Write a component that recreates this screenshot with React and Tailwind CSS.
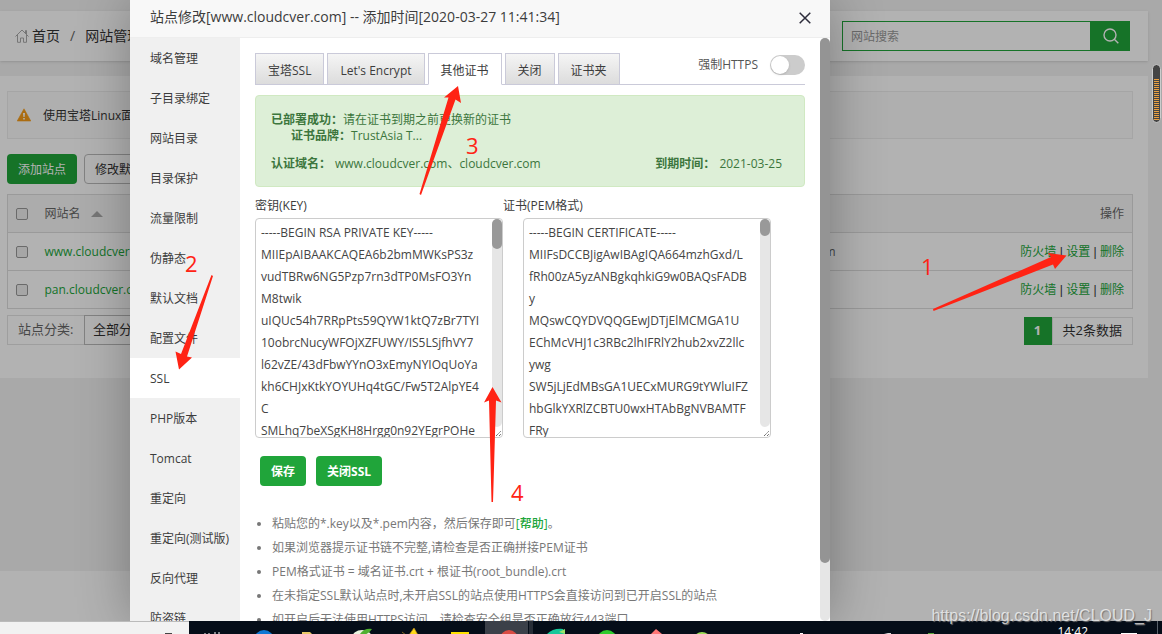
import React, { useState } from 'react';

const sites = [
  { name: 'www.cloudcver.com', note: 'www.cloudcver.com' },
  { name: 'pan.cloudcver.com', note: '' },
];

const menus = [
  '域名管理', '子目录绑定', '网站目录', '目录保护', '流量限制', '伪静态', '默认文档', '配置文件',
  'SSL', 'PHP版本', 'Tomcat', '重定向', '重定向(测试版)', '反向代理', '防盗链',
];

const tabs = ['宝塔SSL', "Let's Encrypt", '其他证书', '关闭', '证书夹'];

const keyText = `-----BEGIN RSA PRIVATE KEY-----
MIIEpAIBAAKCAQEA6b2bmMWKsPS3z
vudTBRw6NG5Pzp7rn3dTP0MsFO3Yn
M8twik
uIQUc54h7RRpPts59QYW1ktQ7zBr7TYI
10obrcNucyWFOjXZFUWY/IS5LSjfhVY7
l62vZE/43dFbwYYnO3xEmyNYIOqUoYa
kh6CHJxKtkYOYUHq4tGC/Fw5T2AlpYE4
C
SMLhq7beXSgKH8Hrgg0n92YEgrPOHe`;

const pemText = `-----BEGIN CERTIFICATE-----
MIIFsDCCBJigAwIBAgIQA664mzhGxd/L
fRh00zA5yzANBgkqhkiG9w0BAQsFADB
y
MQswCQYDVQQGEwJDTjElMCMGA1U
EChMcVHJ1c3RBc2lhIFRlY2hub2xvZ2llc
ywg
SW5jLjEdMBsGA1UECxMURG9tYWluIFZ
hbGlkYXRlZCBTU0wxHTAbBgNVBAMTF
FRy`;

const HomeIcon = () => (
  <svg className="h-3.5 w-3.5" viewBox="0 0 14 14" fill="none" stroke="#aaa" strokeWidth="1">
    <path d="M.5 7.5 7 1l6.5 6.5M2.5 6v7.3h3V9h3v4.3h3V6M10.5 4V1.5h1V5" />
  </svg>
);

const WarnIcon = () => (
  <svg className="h-3.5 w-3.5" viewBox="0 0 14 14">
    <path d="M7 .8 13.8 13H.2z" fill="#f59c1a" stroke="#f59c1a" strokeLinejoin="round" strokeWidth=".6" />
    <path d="M6 5h2l-.4 4H6.4zM6.2 10h1.6v1.5H6.2z" fill="#fff" />
  </svg>
);

const CodeBox = ({ id, value, thumb }) => (
  <div className="relative flex h-[220px] w-[248px] rounded-sm border border-[#ccc] bg-white">
    <textarea
      id={id}
      defaultValue={value}
      spellCheck={false}
      className="min-w-0 flex-1 resize-none overflow-hidden whitespace-pre py-[3px] pl-[5px] text-xs leading-[22px] text-[#444] outline-none"
    />
    <div className="flex w-2.5 flex-col">
      <div className="flex-1 rounded-full bg-[#e6e6e6]">
        <div className={`rounded-full bg-[#999] ${thumb}`} />
      </div>
      <svg className="h-2.5 w-2.5" viewBox="0 0 10 10" stroke="#555" strokeWidth="1">
        <path d="M4 9l5-5M7 9l2-2" strokeDasharray="1.2 .6" />
      </svg>
    </div>
  </div>
);

const SitePage = () => (
  <div className="flex h-full flex-col pt-[11px] text-xs text-[#333]">
    <header className="mr-3.5 flex h-[50px] shrink-0 items-center justify-between bg-white pl-[15px] pr-[18px] shadow">
      <nav className="flex items-center text-sm">
        <HomeIcon />
        <a href="#home" className="ml-[3px]">首页</a>
        <span className="mx-2.5 text-[#666]">/</span>
        <a href="#site">网站管理</a>
      </nav>
      <form className="flex h-[30px] w-[288px]">
        <input
          type="text"
          aria-label="网站搜索"
          placeholder="网站搜索"
          className="min-w-0 flex-1 border border-[#20a53a] px-2 pt-0.5 outline-none placeholder:text-[#999]"
        />
        <button type="button" aria-label="搜索" className="flex w-[39px] items-center justify-center bg-[#20a53a]">
          <svg className="h-4 w-4" viewBox="0 0 16 16" fill="none" stroke="#fff" strokeWidth="1.4">
            <circle cx="7" cy="7" r="6" />
            <path d="M11.3 11.3l4 4" />
          </svg>
        </button>
      </form>
    </header>

    <section className="mr-3.5 mt-[15px] h-[302px] shrink-0 bg-white pl-[7px] pr-[15px] pt-[15px]">
      <div className="flex h-12 items-center gap-3 border border-[#ececec] bg-[#fbfbfb] pl-[9px]">
        <WarnIcon />
        <p className="pt-0.5">使用宝塔Linux面板创建站点时会自动创建权限</p>
      </div>
      <div className="mt-[15px] flex h-[30px] gap-[7px]">
        <button type="button" className="rounded-sm bg-[#20a53a] px-[11px] pt-0.5 text-white">添加站点</button>
        <button type="button" className="rounded-sm border border-[#bbb] px-2.5 pt-0.5">修改默认页</button>
      </div>
      <table className="mt-2.5 w-full border-collapse text-left">
        <thead>
          <tr className="h-[38px] border border-[#ddd] bg-[#f6f6f6] text-[#666]">
            <th className="w-[37px] pl-2"><input type="checkbox" aria-label="全选" className="block h-3 w-3 appearance-none rounded-xs border border-[#999] bg-[#eee]" /></th>
            <th className="font-normal">
              <span className="flex items-center gap-2.5">
                网站名
                <svg className="h-1.5 w-3" viewBox="0 0 12 6"><path d="M6 0l6 6H0z" fill="#aaa" /></svg>
              </span>
            </th>
            <th />
            <th className="w-[297px] pr-2 text-right font-normal">操作</th>
          </tr>
        </thead>
        <tbody>
          {sites.map((site) => (
            <tr key={site.name} className="h-[38px] border border-[#ddd]">
              <td className="pl-2"><input type="checkbox" aria-label={site.name} className="block h-3 w-3 appearance-none rounded-xs border border-[#999] bg-[#eee]" /></td>
              <td><a href="#site" className="text-[#20a53a]">{site.name}</a></td>
              <td className="text-right text-[#666]">{site.note}</td>
              <td className="pr-2 text-right font-['Liberation_Sans','Noto_Sans_CJK_SC',sans-serif]">
                <a href="#waf" className="text-[#20a53a]">防火墙</a> | <a href="#set" className="text-[#20a53a]">设置</a> | <a href="#del" className="text-[#20a53a]">删除</a>
              </td>
            </tr>
          ))}
        </tbody>
      </table>
      <div className="mt-1.5 flex items-center justify-between text-[13px]">
        <div className="flex h-[30px] border border-[#e2e2e2]">
          <label htmlFor="type" className="flex w-[76px] items-center pl-2.5 text-[#666]">站点分类:</label>
          <select id="type" className="-my-px w-32 appearance-none border border-[#bbb] px-2">
            <option>全部分类</option>
          </select>
        </div>
        <div className="mt-0.5 flex h-7 items-center">
          <span className="flex h-7 w-7 items-center justify-center bg-[#20a53a] font-bold text-white">1</span>
          <span className="flex h-7 items-center border border-[#e2e2e2] px-2.5">共2条数据</span>
        </div>
      </div>
    </section>

    <footer className="mt-auto h-[50px] bg-white" />
  </div>
);

const SiteDialog = () => {
  const [menu, setMenu] = useState('SSL');
  const [tab, setTab] = useState('其他证书');

  return (
    <div role="dialog" className="flex h-full w-[700px] flex-col bg-white text-xs text-[#3c3c3c] shadow-[1px_1px_50px_rgba(0,0,0,0.3)]">
      <div className="flex h-[38px] shrink-0 items-center justify-between border-b border-[#eee] bg-[#f8f8f8] pb-0.5 pl-5 pr-[19px]">
        <h1 className="pb-0.5 text-sm">站点修改[www.cloudcver.com] -- 添加时间[2020-03-27 11:41:34]</h1>
        <button type="button" aria-label="关闭窗口">
          <svg className="h-3 w-3" viewBox="0 0 12 12" stroke="#2d2c3b" strokeWidth="1.5">
            <path d="M.7.7l10.6 10.6M11.3.7.7 11.3" />
          </svg>
        </button>
      </div>

      <div className="flex min-h-0 flex-1">
        <nav className="w-[110px] shrink-0 overflow-hidden bg-[#f0f0f0]">
          {menus.map((item) => (
            <button
              key={item}
              type="button"
              onClick={() => setMenu(item)}
              className={`block h-10 w-full whitespace-nowrap pl-5 pt-0.5 text-left ${item === menu ? 'bg-white' : ''}`}
            >
              {item}
            </button>
          ))}
        </nav>

        <div className="min-w-0 flex-1 overflow-hidden px-[15px] pt-[15px]">
          <div className="flex h-8 justify-between border-b border-[#cacad9]">
            <div className="flex gap-[3px]">
              {tabs.map((item) => (
                <button
                  key={item}
                  type="button"
                  onClick={() => setTab(item)}
                  className={`h-8 whitespace-nowrap border border-[#cacad9] px-3 pt-1 ${item === tab ? 'border-b-white bg-white' : 'bg-linear-to-b from-[#f5f5f5] to-[#dcdcdc]'}`}
                >
                  {item}
                </button>
              ))}
            </div>
            <label className="flex h-6 items-center gap-3 text-[#555]">
              强制HTTPS
              <input
                type="checkbox"
                className="h-5 w-[35px] appearance-none rounded-full bg-[#ccc] before:m-px before:block before:h-[18px] before:w-[18px] before:rounded-full before:bg-white before:shadow checked:bg-[#20a53a] checked:before:ml-4"
              />
            </label>
          </div>

          <div className="mt-2.5 h-[92px] rounded-sm border border-[#d0e9c2] bg-[#ddefd7] px-[15px] pt-4 leading-4 text-[#3c763d]">
            <p><b>已部署成功：</b>请在证书到期之前更换新的证书</p>
            <p className="pl-5"><b>证书品牌：</b>TrustAsia T...</p>
            <div className="mt-3 flex justify-between pr-[7px]">
              <p><b className="mr-1">认证域名：</b>www.cloudcver.com、cloudcver.com</p>
              <p><b className="mr-1">到期时间：</b>2021-03-25</p>
            </div>
          </div>

          <div className="mt-2.5 flex h-[21px] leading-[18px]">
            <label htmlFor="key" className="w-[248px]">密钥(KEY)</label>
            <label htmlFor="pem">证书(PEM格式)</label>
          </div>
          <div className="flex gap-5">
            <CodeBox id="key" value={keyText} thumb="h-[30px]" />
            <CodeBox id="pem" value={pemText} thumb="h-[17px]" />
          </div>

          <div className="mt-[18px] flex h-[30px] gap-2.5 pl-[5px] font-bold text-white">
            <button type="button" className="rounded-sm bg-[#20a53a] px-[11px] pt-0.5">保存</button>
            <button type="button" className="rounded-sm bg-[#20a53a] px-[11px] pt-0.5">关闭SSL</button>
          </div>

          <ul className="mt-[26px] list-disc whitespace-nowrap pl-[17px] leading-6 text-[#777]">
            <li>粘贴您的*.key以及*.pem内容，然后保存即可<a href="#help" className="font-medium text-[#20a53a]">[帮助]</a>。</li>
            <li>如果浏览器提示证书链不完整,请检查是否正确拼接PEM证书</li>
            <li>PEM格式证书 = 域名证书.crt + 根证书(root_bundle).crt</li>
            <li>在未指定SSL默认站点时,未开启SSL的站点使用HTTPS会直接访问到已开启SSL的站点</li>
            <li>如开启后无法使用HTTPS访问，请检查安全组是否正确放行443端口</li>
          </ul>
        </div>

        <div className="w-2.5 rounded-full bg-[#e6e6e6]">
          <div className="h-[90%] rounded-full bg-[#949494]" />
        </div>
      </div>
    </div>
  );
};

const TaskBar = () => (
  <div className="flex h-[13px] shrink-0 overflow-hidden bg-[#050d18]">
    <div className="w-[189px] shrink-0 border-t border-[#bbb] bg-[#f2f2f2]">
      <div className="ml-[165px] mt-[11px] h-px w-[7px] bg-[#444]" />
    </div>
    <svg className="h-[13px] w-[560px] shrink-0" viewBox="189 621 560 13">
      <rect x="485" y="621" width="43" height="13" fill="#3b4049" />
      <rect x="529" y="621" width="4" height="13" fill="#272d37" />
      <path d="M205 633v1M209 633v1M215 632v2M219 632v2" stroke="#fff" />
      <circle cx="264" cy="640" r="10" fill="#0f78d4" />
      <path d="M302 632h8l2 2h10v4h-20z" fill="#e8c766" />
      <ellipse cx="362" cy="638" rx="10" ry="8" fill="#e9f3df" />
      <path d="M360 634q4-6 12-5-3 5-9 6z" fill="#4fb030" />
      <path d="M409 635l5-7 4 7zM402 632l4 3" fill="#ffd91a" stroke="#b98b20" strokeWidth=".7" />
      <rect x="451" y="632" width="18" height="5" fill="#ffe100" />
      <circle cx="509" cy="639" r="9" fill="#d94b43" />
      <path d="M547 634q6-6 16-5l2 5z" fill="#16c79a" />
      <path d="M559 632l6-3v5z" fill="#9be36a" />
      <circle cx="607" cy="640" r="10" fill="#2ecb2e" />
      <path d="M651 634l5-5 6 5z" fill="#ff7676" />
      <circle cx="702" cy="641" r="9" fill="#9bdc58" />
    </svg>
    <div className="ml-auto flex gap-8 pr-1 text-xs leading-[22px] text-white">
      <svg className="h-[13px] w-[150px]" viewBox="795 621 150 13">
        <rect x="800" y="633" width="3" height="1" fill="#fff" />
        <path d="M884 634l4-1h3v1z" fill="#ddd" />
        <rect x="928" y="633" width="6" height="1" fill="#5aa83c" />
      </svg>
      <time className="ml-20">14:42</time>
      <svg className="h-[13px] w-[38px]" viewBox="0 0 38 13">
        <path d="M1 12.5h16" stroke="#fff" />
        <path d="M37.5 0v13" stroke="#59616b" />
      </svg>
    </div>
  </div>
);

// red arrows and step numbers drawn over the page
const Steps = () => (
  <svg className="pointer-events-none absolute left-0 top-0 h-[634px] w-[1162px]" viewBox="0 0 1162 634" fill="#ff2314">
    <path d="M933 309 1051 257 1048 253 1066.500 255.500 1055 269 1053 264.500 933.500 311z" />
    <path d="M211.500 275 181 354 175.500 351.500 179 369.500 192 357.500 187 356.500 213 276z" />
    <path d="M419.500 194 448.500 97.500 444 97.500 458 86 461 103 455.500 99.500 421 195z" />
    <path d="M491.500 502 489 400.500 484 402.500 492.500 387 501.500 402.500 496 400.500 493 502z" />
    <g fontSize="22" fontFamily="'Open Sans', sans-serif">
      <text x="921" y="275">1</text>
      <text x="185" y="272">2</text>
      <text x="466" y="154">3</text>
      <text x="511" y="501">4</text>
    </g>
  </svg>
);

const App = () => (
  <div className="relative flex h-screen flex-col overflow-hidden bg-[#f2f2f2] font-['Open_Sans','Noto_Sans_CJK_SC',sans-serif]">
    <main className="relative min-h-0 flex-1 overflow-hidden">
      <SitePage />
      <div className="absolute inset-0 bg-black/30" />
      <div className="absolute inset-y-0 left-[130px]">
        <SiteDialog />
      </div>
      <div className="absolute right-px top-16 h-[59px] w-[9px] rounded-full border border-[#ccc] bg-[#444] px-px pb-0.5 pt-3.5">
        <div className="h-full bg-[repeating-linear-gradient(to_bottom,#eaa040_0px,#eaa040_1px,#444_1px,#444_2px)]" />
      </div>
    </main>
    <TaskBar />
    <p className="absolute bottom-2 right-2.5 font-['Liberation_Sans',sans-serif] text-base leading-5 text-white/70 [text-shadow:1px_1px_1px_#777]">
      https://blog.csdn.net/CLOUD_J
    </p>
    <Steps />
  </div>
);

export default App;
